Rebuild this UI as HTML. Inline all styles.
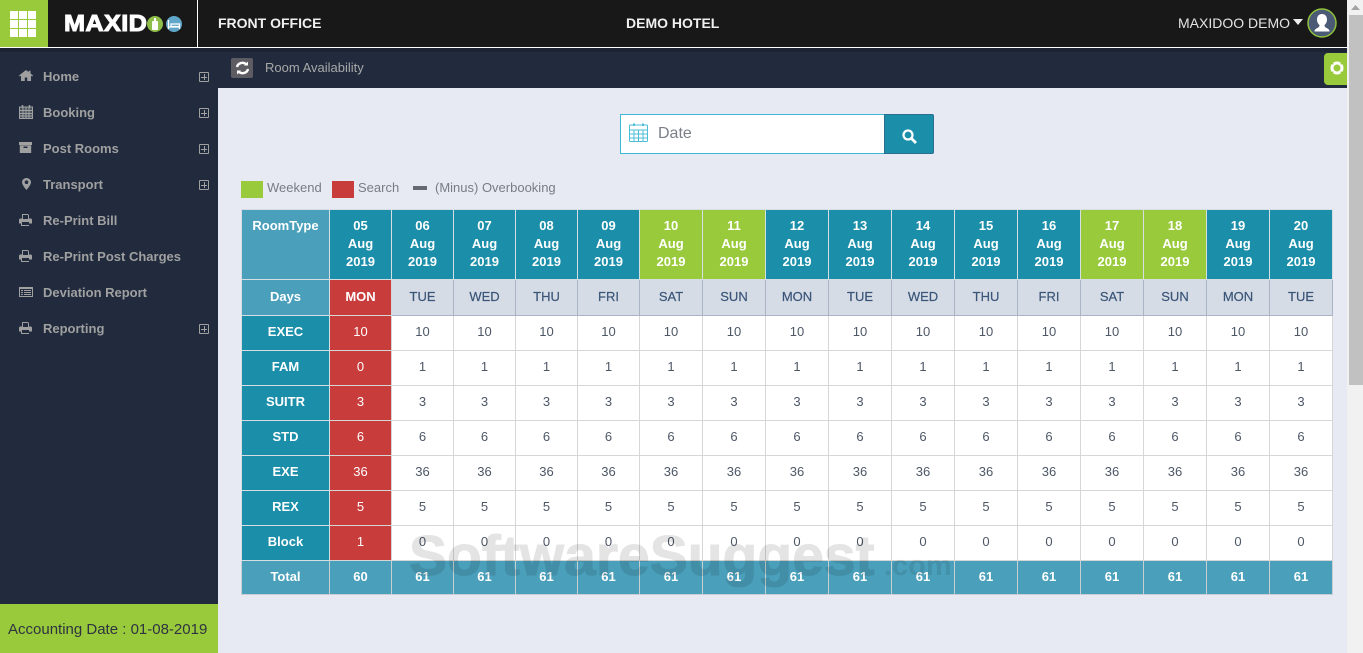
<!DOCTYPE html>
<html><head><meta charset="utf-8"><style>
html,body{margin:0;padding:0;width:1363px;height:653px;overflow:hidden;background:#e7eaf3;font-family:"Liberation Sans",sans-serif}
.a{position:absolute;white-space:nowrap}
.m{left:43px;font:bold 13px/16px "Liberation Sans",sans-serif;color:#a0a0a0}
.i{position:absolute;left:19px}
.p{position:absolute;left:199px;width:8px;height:8px;border:1px solid #a0a0a0;border-radius:1px;background:linear-gradient(#a0a0a0,#a0a0a0) center/6px 1px no-repeat,linear-gradient(#a0a0a0,#a0a0a0) center/1px 6px no-repeat}
table{position:absolute;left:241px;top:209px;width:1091px;table-layout:fixed;border-collapse:collapse;font:13px "Liberation Sans",sans-serif;color:#4d5766}
td,th{box-sizing:border-box;border:1px solid #d6d6d6;padding:0 0 3px;text-align:center;background:#fff;height:35px}
th{font-weight:bold;color:#fff;background:#1b8ea9;border-color:#d6dde3}
.h th{height:70px;line-height:18px;padding:0 0 2px}
.l{background:#4a9fbb}
.g{background:#99ca3c}
.r{background:#c83c3c;color:#fff;border-color:#d6d6d6}
.d td{height:36px;padding-bottom:2px;background:#d5dce6;color:#3a5578;border-color:#a9b5c5;-webkit-text-stroke:.2px #3a5578}
.d th{height:36px;padding-bottom:2px}
.t th{height:34px;background:#4a9fbb;border-color:#c9ced2}
</style></head><body>
<div class="a" style="left:0;top:0;width:1347px;height:47px;background:#181818"></div>
<div class="a" style="left:0;top:47px;width:1347px;height:1px;background:#fff"></div>
<div class="a" style="left:0;top:48px;width:1347px;height:40px;background:#212b3d"></div>
<div class="a" style="left:0;top:48px;width:218px;height:556px;background:#212b3d"></div>
<div class="a" style="left:0;top:48px;width:1347px;height:4px;background:#1c2433"></div>
<div class="a" style="left:0;top:0;width:48px;height:47px;background:#99ca3c"></div>
<svg class="a" style="left:10px;top:11px" width="26" height="26" fill="#fff"><rect width="8" height="8"/><rect x="9" width="8" height="8"/><rect x="18" width="8" height="8"/><rect y="9" width="8" height="8"/><rect x="9" y="9" width="8" height="8"/><rect x="18" y="9" width="8" height="8"/><rect y="18" width="8" height="8"/><rect x="9" y="18" width="8" height="8"/><rect x="18" y="18" width="8" height="8"/></svg>
<div class="a" style="left:64px;top:10px;font:bold 23px/27px 'Liberation Sans',sans-serif;color:#fff;letter-spacing:.3px;-webkit-text-stroke:1px #fff;transform:scaleX(1.1);transform-origin:left center">MAXID</div>
<svg class="a" style="left:147px;top:15px" width="36" height="18"><circle cx="8" cy="9" r="8" fill="#8fbf4a"/><rect x="5" y="6" width="6" height="9" rx="1" fill="#fff"/><rect x="7" y="3" width="2" height="3" fill="#fff"/><circle cx="27" cy="9" r="8" fill="#5fa6c9"/><path d="M21.500 5v9M32.500 9v5M21.500 12h11M24 9h8.500v2.500H24z" stroke="#fff" stroke-width="1.300" fill="none"/></svg>
<div class="a" style="left:197px;top:0;width:1px;height:47px;background:#fff"></div>
<div class="a" style="left:218px;top:15px;font:bold 14px/16px 'Liberation Sans',sans-serif;color:#f0f0f0">FRONT OFFICE</div>
<div class="a" style="left:626px;top:15px;font:bold 14px/16px 'Liberation Sans',sans-serif;color:#f0f0f0">DEMO HOTEL</div>
<div class="a" style="left:1178px;top:15px;font:14px/16px 'Liberation Sans',sans-serif;color:#e4e4e4">MAXIDOO DEMO</div>
<svg class="a" style="left:1293px;top:19px" width="10" height="6"><path d="M0 0h10L5 6z" fill="#eee"/></svg>
<svg class="a" style="left:1307px;top:8px" width="30" height="30"><circle cx="15" cy="15" r="14" fill="#4b5a75" stroke="#8fc23c" stroke-width="1.500"/><path d="M15 6c-3.500 0-5 2.700-5 5.500 0 2.500 1.200 4.500 2.500 5.500 0 1.500-.5 2.200-2 3-1.500.7-3 1.500-3 3.500h15c0-2-1.500-2.800-3-3.500-1.500-.8-2-1.500-2-3 1.300-1 2.500-3 2.500-5.500C20 8.700 18.500 6 15 6z" fill="#fff"/></svg>

<svg class="i" style="top:70px" width="14" height="11" fill="#a0a0a0"><path d="M7 0L0 5.500l.8 1L2 5.600V11h3.800V7.500h2.400V11H12V5.600l1.200.9.8-1L11.500 3.500V.8H9.700v1.300z"/></svg>
<div class="a m" style="top:69px">Home</div><div class="p" style="top:72px"></div>
<svg class="i" style="top:105px" width="14" height="14" fill="none" stroke="#a0a0a0"><rect x=".5" y="2" width="13" height="11.500" fill="#4a5260"/><path d="M.5 5.500h13M.5 8.500h13M.5 11h13M4 2v11.500M7 2v11.500M10 2v11.500" stroke="#a0a0a0"/><path d="M3.500 0v3M10.500 0v3" stroke-width="1.500"/></svg>
<div class="a m" style="top:105px">Booking</div><div class="p" style="top:108px"></div>
<svg class="i" style="top:142px" width="13" height="11" fill="#a0a0a0"><path d="M0 0h13v3H0zM.8 3.300h11.400V11H.8z"/><rect x="4.500" y="4.500" width="4" height="1.500" fill="#212b3d"/></svg>
<div class="a m" style="top:141px">Post Rooms</div><div class="p" style="top:144px"></div>
<svg class="i" style="top:178px;left:22px" width="9" height="12"><path fill-rule="evenodd" d="M4.500 0C2 0 0 2 0 4.300 0 7 4.500 12 4.500 12S9 7 9 4.300C9 2 7 0 4.500 0zm0 6A1.800 1.800 0 1 1 4.500 2.400 1.800 1.800 0 0 1 4.500 6z" fill="#a0a0a0"/></svg>
<div class="a m" style="top:177px">Transport</div><div class="p" style="top:180px"></div>
<svg class="i" style="top:214px" width="13" height="12" fill="#a0a0a0"><path fill-rule="evenodd" d="M3 0h6l1 1v3.500h1.500c1 0 1.500.6 1.500 1.500v3.500h-3V12H2V9.500H0V6c0-.9.5-1.500 1.500-1.500H3zM4 1v4h5V1zM3 8v3h7V8z"/></svg>
<div class="a m" style="top:213px">Re-Print Bill</div>
<svg class="i" style="top:250px" width="13" height="12" fill="#a0a0a0"><path fill-rule="evenodd" d="M3 0h6l1 1v3.500h1.500c1 0 1.500.6 1.500 1.500v3.500h-3V12H2V9.500H0V6c0-.9.5-1.500 1.500-1.500H3zM4 1v4h5V1zM3 8v3h7V8z"/></svg>
<div class="a m" style="top:249px">Re-Print Post Charges</div>
<svg class="i" style="top:287px" width="14" height="10" fill="#a0a0a0"><path fill-rule="evenodd" d="M0 0h14v10H0zM1 2v7h12V2zM2 3h2v1H2zM5 3h7v1H5zM2 5h2v1H2zM5 5h7v1H5zM2 7h2v1H2zM5 7h7v1H5z"/></svg>
<div class="a m" style="top:285px">Deviation Report</div>
<svg class="i" style="top:322px" width="13" height="12" fill="#a0a0a0"><path fill-rule="evenodd" d="M3 0h6l1 1v3.500h1.500c1 0 1.500.6 1.500 1.500v3.500h-3V12H2V9.500H0V6c0-.9.5-1.500 1.500-1.500H3zM4 1v4h5V1zM3 8v3h7V8z"/></svg>
<div class="a m" style="top:321px">Reporting</div><div class="p" style="top:324px"></div>

<div class="a" style="left:0;top:604px;width:218px;height:49px;background:#99ca3c"></div>
<div class="a" style="left:8px;top:621px;font:15px/18px 'Liberation Sans',sans-serif;color:#2e3340">Accounting Date : 01-08-2019</div>

<div class="a" style="left:231px;top:58px;width:22px;height:20px;background:#5c5c62;border-radius:2px"></div>
<svg class="a" style="left:235px;top:61px" width="15" height="14" fill="none" stroke="#fff" stroke-width="2.400"><path d="M2 6a5.500 5 0 0 1 9.500-2.500M13 8a5.500 5 0 0 1-9.500 2.500"/><path d="M9 4.500h4v-4zM6 9.500H2v4z" fill="#fff" stroke="none"/></svg>
<div class="a" style="left:265px;top:60px;font:13px/16px 'Liberation Sans',sans-serif;color:#a8a8a8">Room Availability</div>
<div class="a" style="left:1324px;top:53px;width:23px;height:32px;background:#99ca3c;border-radius:4px 0 0 4px"></div>
<svg class="a" style="left:1330px;top:61px" width="14" height="14"><circle cx="7" cy="7" r="5" fill="none" stroke="#fff" stroke-width="3"/><path d="M3.300 3.300L1 1M10.700 3.300L13 1M3.300 10.700L1 13M10.700 10.700L13 13" stroke="#99ca3c" stroke-width="1.300"/></svg>

<div class="a" style="left:620px;top:114px;width:263px;height:38px;background:#fff;border:1px solid #3fb8d6"></div>
<svg class="a" style="left:629px;top:122px" width="20" height="21" fill="none" stroke="#4dbcd9"><rect x=".5" y="3" width="18" height="16.500" rx="1"/><path d="M.5 8h18M.5 12h18M.5 16h18M5 8v11M9.500 8v11M14 8v11"/><path d="M5 4V1.500M14 4V1.500" stroke-width="2"/></svg>
<div class="a" style="left:658px;top:124px;font:16px/19px 'Liberation Sans',sans-serif;color:#7a7f88">Date</div>
<div class="a" style="left:884px;top:114px;width:48px;height:38px;background:#1b8ea9;border:1px solid #2a6f8f;border-radius:0 2px 2px 0"></div>
<svg class="a" style="left:902px;top:129px" width="15" height="15" fill="none" stroke="#fff" stroke-width="2.200"><circle cx="6" cy="6" r="4.500"/><path d="M9.500 9.500L14 14" stroke-width="2.800"/></svg>

<div class="a" style="left:241px;top:181px;width:22px;height:17px;background:#99ca3c"></div>
<div class="a" style="left:267px;top:180px;font:13px/16px 'Liberation Sans',sans-serif;color:#777c85">Weekend</div>
<div class="a" style="left:332px;top:181px;width:22px;height:17px;background:#c83c3c"></div>
<div class="a" style="left:358px;top:180px;font:13px/16px 'Liberation Sans',sans-serif;color:#777c85">Search</div>
<div class="a" style="left:413px;top:186px;width:14px;height:4px;background:#666a70"></div>
<div class="a" style="left:435px;top:180px;font:13px/16px 'Liberation Sans',sans-serif;color:#777c85">(Minus) Overbooking</div>

<table>
<colgroup><col style="width:88px"><col style="width:62px"><col style="width:62px"><col style="width:62px"><col style="width:62px"><col style="width:62px"><col style="width:63px"><col style="width:63px"><col style="width:63px"><col style="width:63px"><col style="width:63px"><col style="width:63px"><col style="width:63px"><col style="width:63px"><col style="width:63px"><col style="width:63px"><col style="width:63px"></colgroup>
<tr class="h"><th class="l" style="vertical-align:top;padding-top:7px">RoomType</th><th>05<br>Aug<br>2019</th><th>06<br>Aug<br>2019</th><th>07<br>Aug<br>2019</th><th>08<br>Aug<br>2019</th><th>09<br>Aug<br>2019</th><th class="g">10<br>Aug<br>2019</th><th class="g">11<br>Aug<br>2019</th><th>12<br>Aug<br>2019</th><th>13<br>Aug<br>2019</th><th>14<br>Aug<br>2019</th><th>15<br>Aug<br>2019</th><th>16<br>Aug<br>2019</th><th class="g">17<br>Aug<br>2019</th><th class="g">18<br>Aug<br>2019</th><th>19<br>Aug<br>2019</th><th>20<br>Aug<br>2019</th></tr>
<tr class="d"><th class="l">Days</th><th class="r">MON</th><td>TUE</td><td>WED</td><td>THU</td><td>FRI</td><td>SAT</td><td>SUN</td><td>MON</td><td>TUE</td><td>WED</td><td>THU</td><td>FRI</td><td>SAT</td><td>SUN</td><td>MON</td><td>TUE</td></tr>
<tr><th>EXEC</th><td class="r">10</td><td>10</td><td>10</td><td>10</td><td>10</td><td>10</td><td>10</td><td>10</td><td>10</td><td>10</td><td>10</td><td>10</td><td>10</td><td>10</td><td>10</td><td>10</td></tr>
<tr><th>FAM</th><td class="r">0</td><td>1</td><td>1</td><td>1</td><td>1</td><td>1</td><td>1</td><td>1</td><td>1</td><td>1</td><td>1</td><td>1</td><td>1</td><td>1</td><td>1</td><td>1</td></tr>
<tr><th>SUITR</th><td class="r">3</td><td>3</td><td>3</td><td>3</td><td>3</td><td>3</td><td>3</td><td>3</td><td>3</td><td>3</td><td>3</td><td>3</td><td>3</td><td>3</td><td>3</td><td>3</td></tr>
<tr><th>STD</th><td class="r">6</td><td>6</td><td>6</td><td>6</td><td>6</td><td>6</td><td>6</td><td>6</td><td>6</td><td>6</td><td>6</td><td>6</td><td>6</td><td>6</td><td>6</td><td>6</td></tr>
<tr><th>EXE</th><td class="r">36</td><td>36</td><td>36</td><td>36</td><td>36</td><td>36</td><td>36</td><td>36</td><td>36</td><td>36</td><td>36</td><td>36</td><td>36</td><td>36</td><td>36</td><td>36</td></tr>
<tr><th>REX</th><td class="r">5</td><td>5</td><td>5</td><td>5</td><td>5</td><td>5</td><td>5</td><td>5</td><td>5</td><td>5</td><td>5</td><td>5</td><td>5</td><td>5</td><td>5</td><td>5</td></tr>
<tr><th>Block</th><td class="r">1</td><td>0</td><td>0</td><td>0</td><td>0</td><td>0</td><td>0</td><td>0</td><td>0</td><td>0</td><td>0</td><td>0</td><td>0</td><td>0</td><td>0</td><td>0</td></tr>
<tr class="t"><th>Total</th><th>60</th><th>61</th><th>61</th><th>61</th><th>61</th><th>61</th><th>61</th><th>61</th><th>61</th><th>61</th><th>61</th><th>61</th><th>61</th><th>61</th><th>61</th><th>61</th></tr>
</table>

<div class="a" style="left:409px;top:523px;font:bold 57px/66px 'Liberation Sans',sans-serif;color:#000;-webkit-text-stroke:1px #000;opacity:.1;pointer-events:none">SoftwareSuggest</div>
<div class="a" style="left:884px;top:549px;font:bold 29px/34px 'Liberation Sans',sans-serif;color:#000;opacity:.09;pointer-events:none">.com</div>

<div class="a" style="left:1347px;top:0;width:16px;height:653px;background:#f1f1f1"></div>
<svg class="a" style="left:1351px;top:5px" width="9" height="5"><path d="M0 5h9L4.500 0z" fill="#a3a3a3"/></svg>
<div class="a" style="left:1349px;top:15px;width:14px;height:370px;background:#c1c1c1"></div>
</body></html>
